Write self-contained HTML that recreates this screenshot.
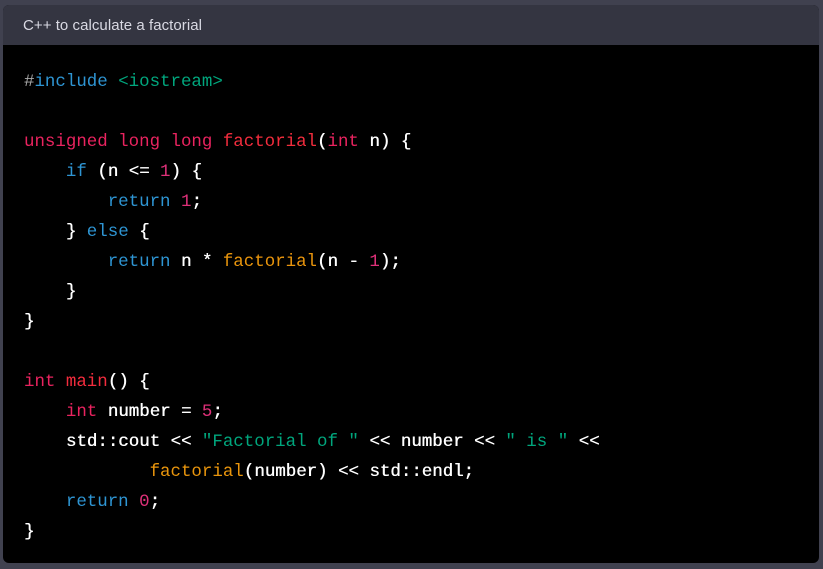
<!DOCTYPE html>
<html><head><style>
html,body{margin:0;padding:0;background:#40414f;width:823px;height:569px;overflow:hidden}
.box{position:absolute;left:3px;top:5px;width:816px;height:558px;border-radius:6px;overflow:hidden;background:#000}
.hd{height:40px;background:#343541;color:#d9d9e3;font:15px "Liberation Sans",sans-serif;line-height:41px;padding-left:20px;letter-spacing:0.05px}
pre{margin:0;position:absolute;left:21px;top:62px;font:17.45px/30px "Liberation Mono",monospace;color:#fff;text-shadow:0.4px 0 0 #fff}
.k{color:#e9235f}.f{color:#f22c3d}.b{color:#2e95d3}.g{color:#00a67d}.o{color:#e9950c}.n{color:#df3079}.m{color:#aaa}
.k,.f,.b,.g,.o,.n,.m{text-shadow:none}
</style></head><body>
<div class="box"><div class="hd">C++ to calculate a factorial</div>
<pre><span class="m">#</span><span class="b">include</span> <span class="g">&lt;iostream&gt;</span>

<span class="k">unsigned long long</span> <span class="f">factorial</span>(<span class="k">int</span> n) {
    <span class="b">if</span> (n &lt;= <span class="n">1</span>) {
        <span class="b">return</span> <span class="n">1</span>;
    } <span class="b">else</span> {
        <span class="b">return</span> n * <span class="o">factorial</span>(n - <span class="n">1</span>);
    }
}

<span class="k">int</span> <span class="f">main</span>() {
    <span class="k">int</span> number = <span class="n">5</span>;
    std::cout &lt;&lt; <span class="g">"Factorial of "</span> &lt;&lt; number &lt;&lt; <span class="g">" is "</span> &lt;&lt;
            <span class="o">factorial</span>(number) &lt;&lt; std::endl;
    <span class="b">return</span> <span class="n">0</span>;
}</pre></div>
</body></html>
